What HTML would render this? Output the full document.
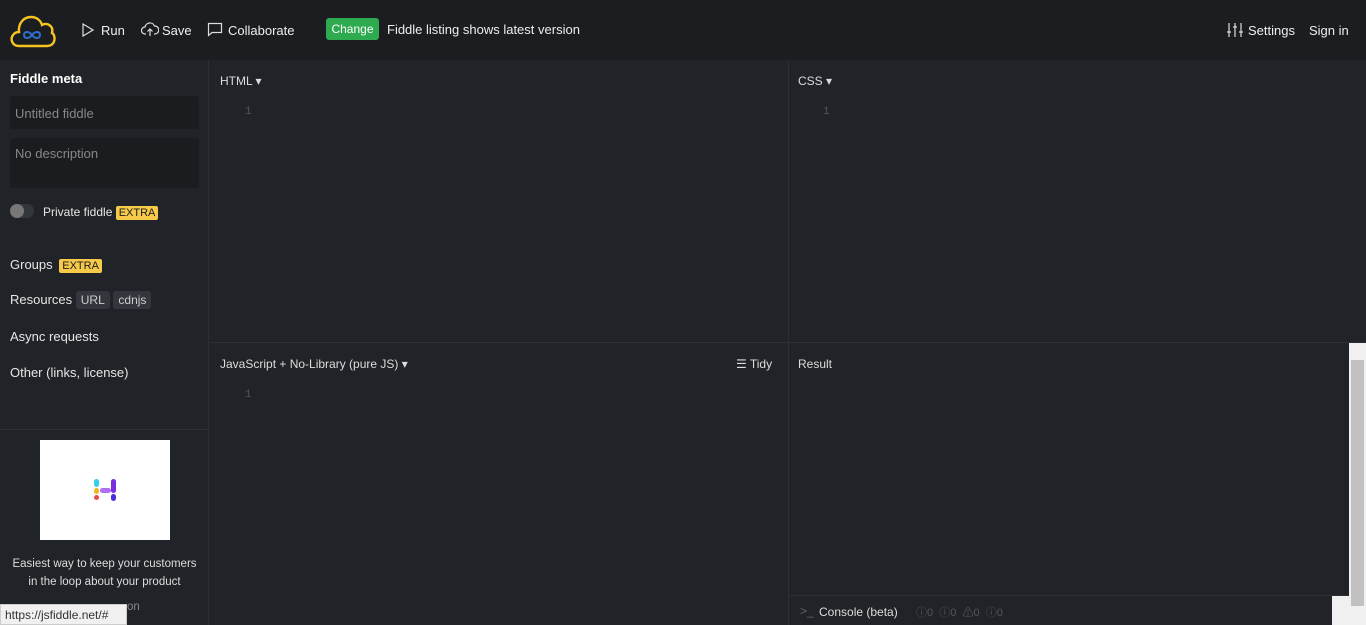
<!DOCTYPE html>
<html><head><style>
*{box-sizing:border-box;margin:0;padding:0}
body{width:1366px;height:625px;overflow:hidden;background:#202327;font-family:"Liberation Sans",sans-serif;color:#e6e6e6;position:relative;font-size:13px}
.a{position:absolute}
#hd{left:0;top:0;width:1366px;height:60px;background:#1b1d21}
.nav{font-size:13px;color:#eee;top:23px}
.side{left:0;top:60px;width:209px;height:565px;border-right:1px solid #2c2f34}
.inp{left:10px;width:189px;background:#1a1c20;border-radius:3px;color:#888;font-size:13px;padding:10px 5px}
.tag{background:#f7c948;color:#1b1d21;font-size:11px;padding:1px 3px;border-radius:2px}
.gt{background:#33373d;color:#ccc;font-size:12px;padding:2px 5px;border-radius:3px}
.lbl{font-size:12px;color:#ddd}
.ln{font-family:"Liberation Mono",monospace;font-size:11px;color:#555}
</style></head><body>
<div id="hd" class="a"></div>
<svg class="a" style="left:9px;top:13px" width="48" height="35" viewBox="0 0 48 35"><path d="M10 33 C3 33 1 26 4 22 C6 19 9 19 10 19 C9 10 15 4 22 4 C28 4 32 8 33 12 C38 9 45 13 43 20 C47 22 47 33 38 33 Z" fill="none" stroke="#f7c31e" stroke-width="2.4"/><path d="M23 22 C20 18 15 18 15 22 C15 26 20 26 23 22 C26 18 31 18 31 22 C31 26 26 26 23 22 Z" fill="none" stroke="#2f6fd0" stroke-width="2"/></svg>
<svg class="a" style="left:82px;top:23px" width="12" height="14"><path d="M1 1 L11 7 L1 13 Z" fill="none" stroke="#ddd" stroke-width="1.2"/></svg>
<div class="a nav" style="left:101px">Run</div>
<svg class="a" style="left:141px;top:22px" width="18" height="15"><path d="M5 12 H4 a3.5 3.5 0 0 1 0-7 a5 5 0 0 1 9.5-1 a3.5 3.5 0 0 1 0.5 8 H13 M9 14 V7 M6.5 9.5 L9 7 L11.5 9.5" fill="none" stroke="#ddd" stroke-width="1.2"/></svg>
<div class="a nav" style="left:162px">Save</div>
<svg class="a" style="left:207px;top:22px" width="16" height="15"><path d="M1.5 1.5 H14.5 V10.5 H5 L1.5 13.5 Z" fill="none" stroke="#ddd" stroke-width="1.2"/></svg>
<div class="a nav" style="left:228px">Collaborate</div>
<div class="a" style="left:326px;top:18px;width:53px;height:22px;background:#2eaa4f;border-radius:3px;color:#fff;font-size:12px;text-align:center;line-height:22px">Change</div>
<div class="a" style="left:387px;top:22px;font-size:13px;color:#eee">Fiddle listing shows latest version</div>
<svg class="a" style="left:1227px;top:23px" width="16" height="14"><path d="M2 0V14M8 0V14M14 0V14M0 9H4M6 4H10M12 9H16" stroke="#ddd" stroke-width="1.2"/></svg>
<div class="a nav" style="left:1248px">Settings</div>
<div class="a nav" style="left:1309px">Sign in</div>

<div class="a side"></div>
<div class="a" style="left:10px;top:71px;font-weight:bold;font-size:13px;color:#fff">Fiddle meta</div>
<div class="a inp" style="top:96px;height:33px">Untitled fiddle</div>
<div class="a inp" style="top:138px;height:50px;padding-top:8px">No description</div>
<div class="a" style="left:10px;top:204px;width:24px;height:14px;border-radius:7px;background:#33363b"></div>
<div class="a" style="left:10px;top:204px;width:14px;height:14px;border-radius:7px;background:#777"></div>
<div class="a" style="left:43px;top:205px;font-size:12px">Private fiddle <span class="tag">EXTRA</span></div>
<div class="a" style="left:10px;top:257px;font-size:13px">Groups <span class="tag" style="margin-left:3px">EXTRA</span></div>
<div class="a" style="left:10px;top:292px;font-size:13px">Resources <span class="gt">URL</span> <span class="gt">cdnjs</span></div>
<div class="a" style="left:10px;top:329px;font-size:13px">Async requests</div>
<div class="a" style="left:10px;top:365px;font-size:13px">Other (links, license)</div>
<div class="a" style="left:0;top:429px;width:209px;border-top:1px solid #2c2f34"></div>
<div class="a" style="left:40px;top:440px;width:130px;height:100px;background:#fff"></div>
<div class="a" style="left:94px;top:479px;width:5px;height:8px;border-radius:3px;background:#2fd0e8"></div>
<div class="a" style="left:94px;top:488px;width:5px;height:6px;border-radius:3px;background:#f3b61f"></div>
<div class="a" style="left:94px;top:495px;width:5px;height:5px;border-radius:3px;background:#e94b4b"></div>
<div class="a" style="left:100px;top:488px;width:11px;height:5px;border-radius:3px;background:#b06ff0"></div>
<div class="a" style="left:111px;top:479px;width:5px;height:14px;border-radius:3px;background:#7b2ee0"></div>
<div class="a" style="left:111px;top:494px;width:5px;height:7px;border-radius:3px;background:#4d2ee0"></div>
<div class="a" style="left:0;top:555px;width:209px;text-align:center;font-size:11.5px;line-height:18px;color:#ddd">Easiest way to keep your customers<br>in the loop about your product</div>
<div class="a" style="left:127px;top:601px;font-size:11.5px;color:#888">on</div>
<div class="a" style="left:0;top:604px;width:127px;height:21px;background:#f0f0f0;border:1px solid #ccc;color:#333;font-size:12px;padding:3px 4px">https://jsfiddle.net/#</div>

<div class="a" style="left:788px;top:60px;width:1px;height:565px;background:#2c2f34"></div>
<div class="a" style="left:210px;top:342px;width:1156px;height:1px;background:#2c2f34"></div>
<div class="a lbl" style="left:220px;top:74px">HTML ▾</div>
<div class="a ln" style="left:245px;top:106px">1</div>
<div class="a lbl" style="left:798px;top:74px">CSS ▾</div>
<div class="a ln" style="left:823px;top:106px">1</div>
<div class="a lbl" style="left:220px;top:357px">JavaScript + No-Library (pure JS) ▾</div>
<div class="a ln" style="left:245px;top:389px">1</div>
<div class="a lbl" style="left:736px;top:357px">☰ Tidy</div>
<div class="a lbl" style="left:798px;top:357px">Result</div>
<div class="a" style="left:1349px;top:343px;width:17px;height:282px;background:#f0f0f0"></div>
<div class="a" style="left:1351px;top:360px;width:13px;height:246px;background:#c1c1c1"></div>
<div class="a" style="left:789px;top:595px;width:560px;height:1px;background:#2c2f34"></div>
<div class="a" style="left:1332px;top:596px;width:17px;height:29px;background:#f0f0f0"></div>
<div class="a" style="left:800px;top:604px;font-size:12px;color:#666">&gt;_</div>
<div class="a lbl" style="left:819px;top:605px">Console (beta)</div>
<div class="a" style="left:916px;top:604px;font-size:11px;color:#555">ⓘ0 &nbsp;ⓘ0 &nbsp;⚠0 &nbsp;ⓘ0</div>
</body></html>
